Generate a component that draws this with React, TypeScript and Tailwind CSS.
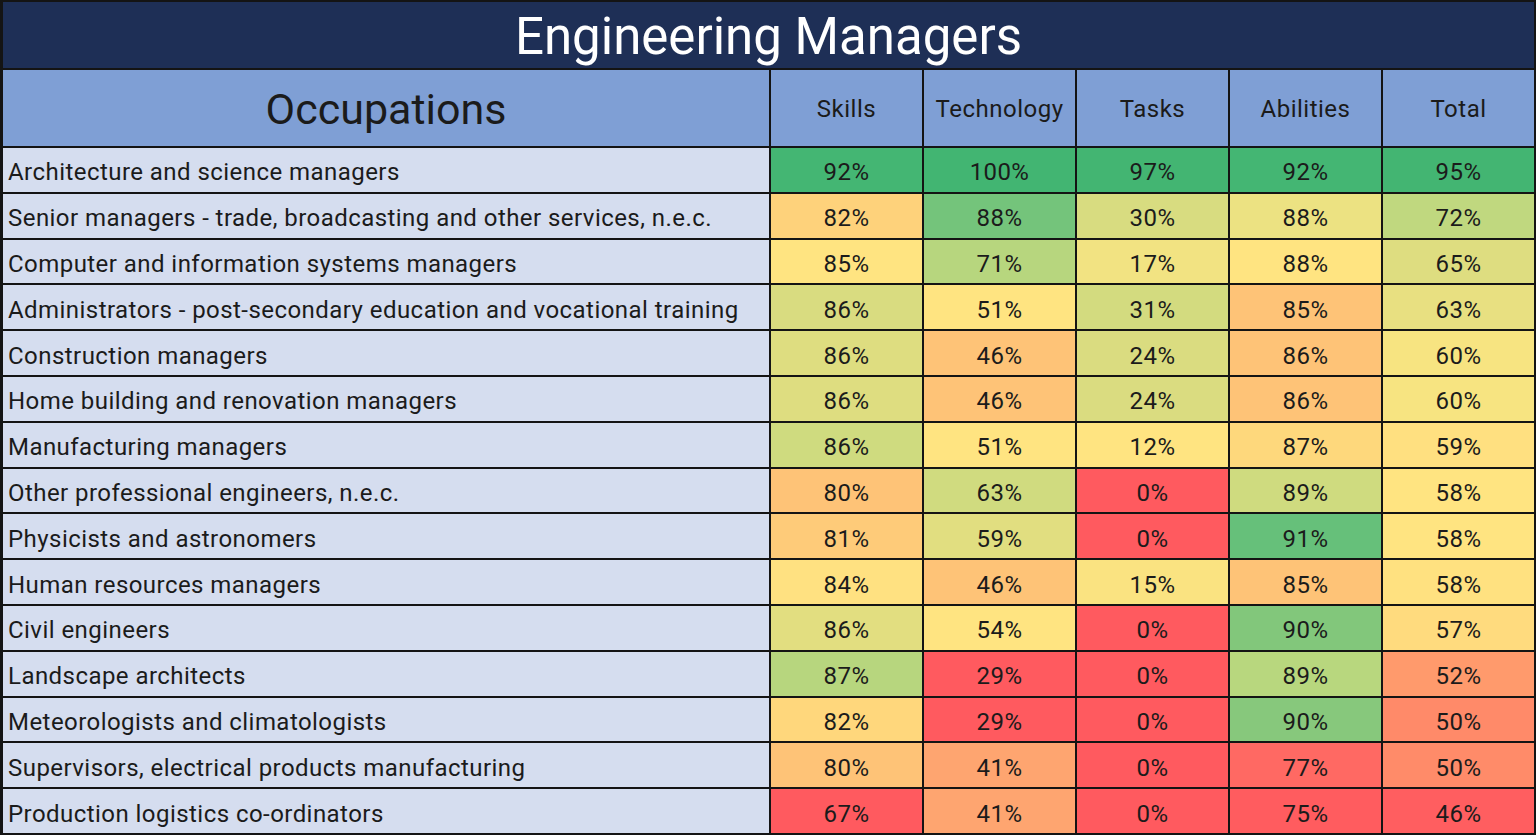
import React from 'react';

type Row = { name: string; cells: [string, string][] };

// value + background colour for each score cell
const rows: Row[] = [
  {
    name: 'Architecture and science managers',
    cells: [
      ['92%', 'bg-[#44b673]'],
      ['100%', 'bg-[#42b572]'],
      ['97%', 'bg-[#43b572]'],
      ['92%', 'bg-[#44b673]'],
      ['95%', 'bg-[#43b572]'],
    ],
  },
  {
    name: 'Senior managers - trade, broadcasting and other services, n.e.c.',
    cells: [
      ['82%', 'bg-[#fed27b]'],
      ['88%', 'bg-[#74c47b]'],
      ['30%', 'bg-[#d8dc80]'],
      ['88%', 'bg-[#ece282]'],
      ['72%', 'bg-[#c0d87f]'],
    ],
  },
  {
    name: 'Computer and information systems managers',
    cells: [
      ['85%', 'bg-[#ffe481]'],
      ['71%', 'bg-[#b7d67e]'],
      ['17%', 'bg-[#f2e382]'],
      ['88%', 'bg-[#ffe481]'],
      ['65%', 'bg-[#dedd80]'],
    ],
  },
  {
    name: 'Administrators - post-secondary education and vocational training',
    cells: [
      ['86%', 'bg-[#d9dc80]'],
      ['51%', 'bg-[#ffe481]'],
      ['31%', 'bg-[#d3db7f]'],
      ['85%', 'bg-[#fec377]'],
      ['63%', 'bg-[#e8e081]'],
    ],
  },
  {
    name: 'Construction managers',
    cells: [
      ['86%', 'bg-[#dedd80]'],
      ['46%', 'bg-[#fec377]'],
      ['24%', 'bg-[#dadc80]'],
      ['86%', 'bg-[#fec377]'],
      ['60%', 'bg-[#f7e481]'],
    ],
  },
  {
    name: 'Home building and renovation managers',
    cells: [
      ['86%', 'bg-[#dedd80]'],
      ['46%', 'bg-[#fec377]'],
      ['24%', 'bg-[#dadc80]'],
      ['86%', 'bg-[#fec377]'],
      ['60%', 'bg-[#f7e481]'],
    ],
  },
  {
    name: 'Manufacturing managers',
    cells: [
      ['86%', 'bg-[#cfdb7f]'],
      ['51%', 'bg-[#ffe481]'],
      ['12%', 'bg-[#ffe481]'],
      ['87%', 'bg-[#fed87c]'],
      ['59%', 'bg-[#ffe080]'],
    ],
  },
  {
    name: 'Other professional engineers, n.e.c.',
    cells: [
      ['80%', 'bg-[#fec377]'],
      ['63%', 'bg-[#d0db7f]'],
      ['0%', 'bg-[#ff5a5f]'],
      ['89%', 'bg-[#cfdb7f]'],
      ['58%', 'bg-[#ffe481]'],
    ],
  },
  {
    name: 'Physicists and astronomers',
    cells: [
      ['81%', 'bg-[#fecb79]'],
      ['59%', 'bg-[#e1de80]'],
      ['0%', 'bg-[#ff5a5f]'],
      ['91%', 'bg-[#66c07a]'],
      ['58%', 'bg-[#ffe481]'],
    ],
  },
  {
    name: 'Human resources managers',
    cells: [
      ['84%', 'bg-[#ffe181]'],
      ['46%', 'bg-[#fec377]'],
      ['15%', 'bg-[#fae381]'],
      ['85%', 'bg-[#fec377]'],
      ['58%', 'bg-[#ffe180]'],
    ],
  },
  {
    name: 'Civil engineers',
    cells: [
      ['86%', 'bg-[#e2de80]'],
      ['54%', 'bg-[#ffe481]'],
      ['0%', 'bg-[#ff5a5f]'],
      ['90%', 'bg-[#82c77b]'],
      ['57%', 'bg-[#ffdb7e]'],
    ],
  },
  {
    name: 'Landscape architects',
    cells: [
      ['87%', 'bg-[#b7d67e]'],
      ['29%', 'bg-[#ff5a5f]'],
      ['0%', 'bg-[#ff5a5f]'],
      ['89%', 'bg-[#b8d77e]'],
      ['52%', 'bg-[#ff9a6c]'],
    ],
  },
  {
    name: 'Meteorologists and climatologists',
    cells: [
      ['82%', 'bg-[#ffd77c]'],
      ['29%', 'bg-[#ff5a5f]'],
      ['0%', 'bg-[#ff5a5f]'],
      ['90%', 'bg-[#87c87c]'],
      ['50%', 'bg-[#ff8a69]'],
    ],
  },
  {
    name: 'Supervisors, electrical products manufacturing',
    cells: [
      ['80%', 'bg-[#fec377]'],
      ['41%', 'bg-[#fea570]'],
      ['0%', 'bg-[#ff5a5f]'],
      ['77%', 'bg-[#ff6963]'],
      ['50%', 'bg-[#ff8b69]'],
    ],
  },
  {
    name: 'Production logistics co-ordinators',
    cells: [
      ['67%', 'bg-[#ff5a5f]'],
      ['41%', 'bg-[#fea570]'],
      ['0%', 'bg-[#ff5a5f]'],
      ['75%', 'bg-[#ff5c5f]'],
      ['46%', 'bg-[#ff5e60]'],
    ],
  },
];

const headers = ['Skills', 'Technology', 'Tasks', 'Abilities', 'Total'];

export default function App() {
  return (
    <div className="w-[1536px] h-[835px] bg-[#141414] pt-[2px] pl-[3px] pr-[2px] pb-[2px] font-['Roboto',sans-serif] text-[#1b1b1b]">
      <div className="grid h-full gap-[2px] grid-cols-[766px_repeat(5,151px)] grid-rows-[66px_76px_repeat(15,1fr)]">
        <div className="col-span-6 bg-[#1e2f56] flex items-center justify-center text-white text-[51px] leading-none pt-[2px]">
          Engineering Managers
        </div>

        <div className="bg-[#7f9fd5] flex items-center justify-center text-[43px] leading-none pt-[2px]">
          Occupations
        </div>
        {headers.map((h) => (
          <div key={h} className="bg-[#7f9fd5] flex items-center justify-center text-[24px] tracking-[0.5px] leading-none pt-[2px]">
            {h}
          </div>
        ))}

        {rows.map((r) => (
          <React.Fragment key={r.name}>
            <div className="bg-[#d5ddef] flex items-center pl-[5px] pt-[5px] text-[24px] tracking-[0.45px] leading-none whitespace-nowrap">
              {r.name}
            </div>
            {r.cells.map(([v, bg], i) => (
              <div key={i} className={`${bg} flex items-center justify-center pt-[5px] text-[24px] tracking-[0.4px] leading-none`}>
                {v}
              </div>
            ))}
          </React.Fragment>
        ))}
      </div>
    </div>
  );
}
